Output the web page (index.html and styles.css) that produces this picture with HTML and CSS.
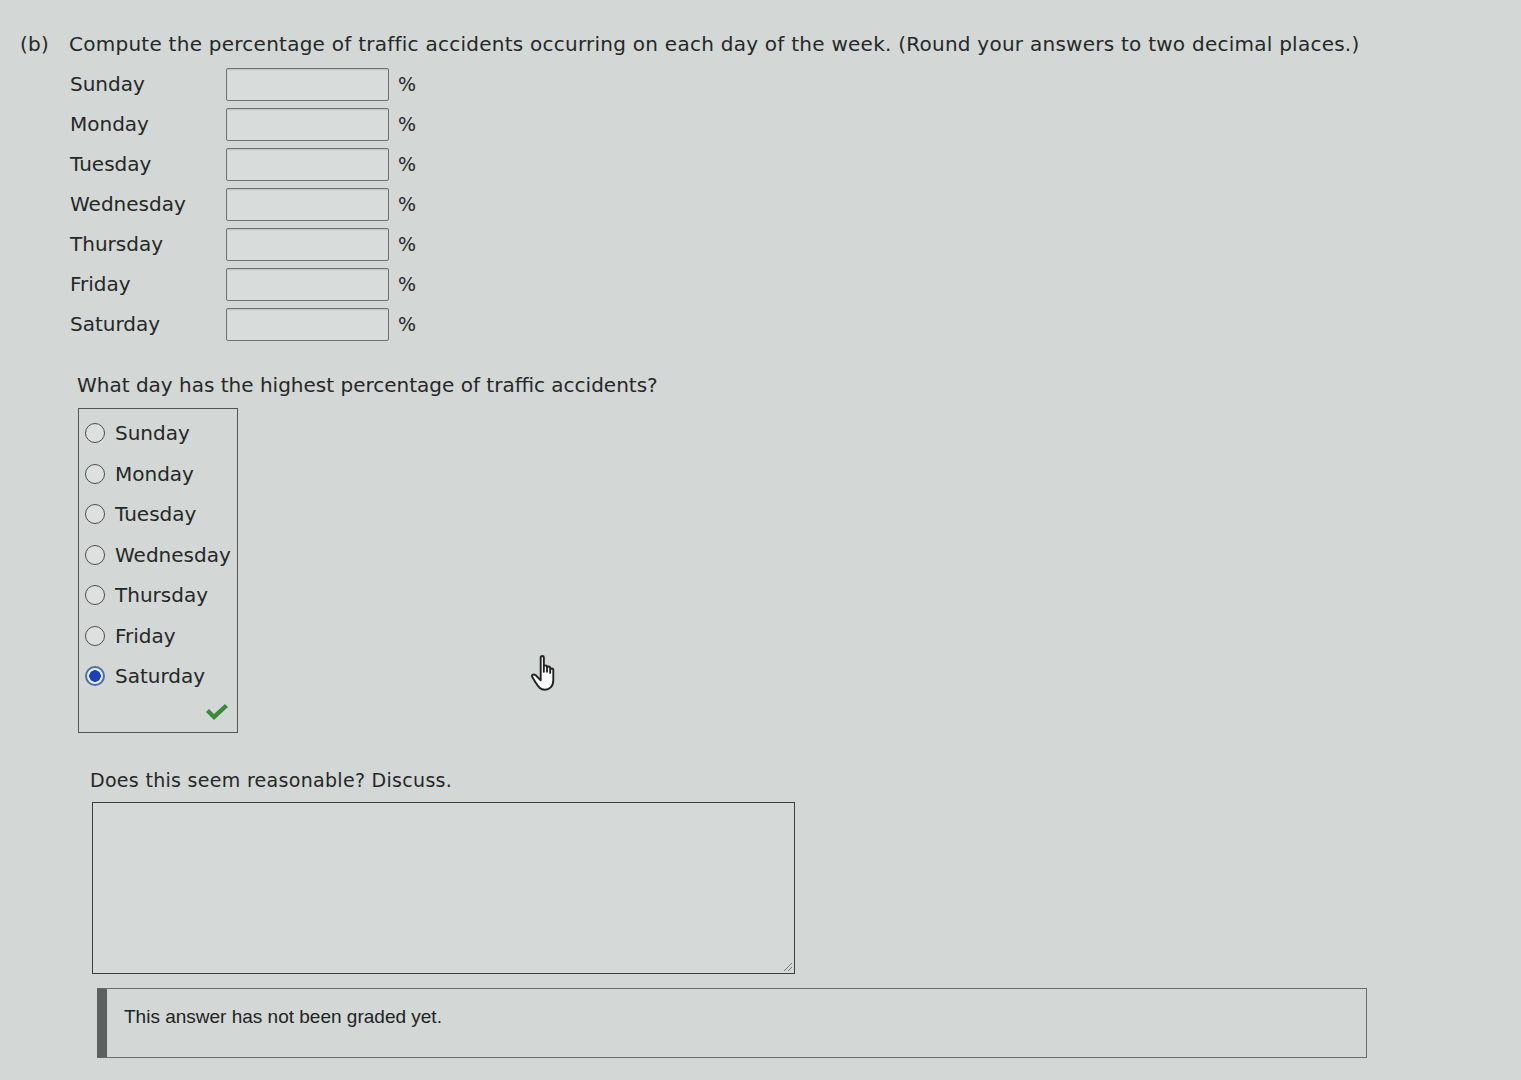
FILE: index.html
```html
<!DOCTYPE html>
<html>
<head>
<meta charset="utf-8">
<link rel="stylesheet" href="styles.css">
</head>
<body>
<div class="page">
  <div class="header">
    <span class="part">(b)</span>
    <span class="prompt">Compute the percentage of traffic accidents occurring on each day of the week. (Round your answers to two decimal places.)</span>
  </div>
  <div class="grid">
    <div class="label">Sunday</div><div class="box"></div><div class="pct">%</div>
    <div class="label">Monday</div><div class="box"></div><div class="pct">%</div>
    <div class="label">Tuesday</div><div class="box"></div><div class="pct">%</div>
    <div class="label">Wednesday</div><div class="box"></div><div class="pct">%</div>
    <div class="label">Thursday</div><div class="box"></div><div class="pct">%</div>
    <div class="label">Friday</div><div class="box"></div><div class="pct">%</div>
    <div class="label">Saturday</div><div class="box"></div><div class="pct">%</div>
  </div>
  <div class="question">What day has the highest percentage of traffic accidents?</div>
  <div class="radios">
    <div class="opt"><span class="radio"></span>Sunday</div>
    <div class="opt"><span class="radio"></span>Monday</div>
    <div class="opt"><span class="radio"></span>Tuesday</div>
    <div class="opt"><span class="radio"></span>Wednesday</div>
    <div class="opt"><span class="radio"></span>Thursday</div>
    <div class="opt"><span class="radio"></span>Friday</div>
    <div class="opt"><span class="radio checked"></span>Saturday</div>
    <div class="check">
      <svg width="24" height="18" viewBox="0 0 24 18"><path d="M1 9 L4 6 L9 11 L20 1 L23 4 L9 17 Z" fill="#3b8a3a"/></svg>
    </div>
  </div>
  <div class="discuss">Does this seem reasonable? Discuss.</div>
  <div class="textarea">
    <svg class="grip" width="12" height="12" viewBox="0 0 12 12"><path d="M11 3 L3 11 M11 7 L7 11" stroke="#777" stroke-width="1"/></svg>
  </div>
  <div class="graded">This answer has not been graded yet.</div>
</div>
<svg class="cursor" width="32" height="42" viewBox="0 0 30 40">
  <path d="M9 3 C9 1.5 12 1.5 12 3 L12 17 L12 12 C12 10.5 15 10.5 15 12 L15 17 L15 13 C15 11.5 18 11.5 18 13 L18 18 L18 15 C18 13.5 21 13.5 21 15 L21 25 C21 31 17 34 13 34 C9 34 7 32 4 27 L1 22 C0 20 2 19 4 20 L9 25 Z" fill="#fff" stroke="#222" stroke-width="1.8" stroke-linejoin="round"/>
</svg>
</body>
</html>
```
FILE: styles.css
```css
html, body {
  margin: 0;
  padding: 0;
}
body {
  background: #d3d7d5;
  font-family: "DejaVu Sans", Verdana, sans-serif;
  color: #262828;
  width: 1521px;
  height: 1080px;
  overflow: hidden;
  position: relative;
}
.page {
  padding: 30px 0 0 20px;
}
.header {
  display: flex;
  gap: 20px;
  font-size: 20px;
  line-height: 28px;
  letter-spacing: 0.25px;
}
.grid {
  display: grid;
  grid-template-columns: 156px 163px 40px;
  grid-auto-rows: 40px;
  align-items: center;
  margin: 6px 0 0 50px;
}
.label {
  font-size: 20px;
}
.box {
  height: 31px;
  border: 1px solid #6e7371;
  border-radius: 2px;
  background: #d8dcda;
  box-shadow: inset 0 1px 1px rgba(0,0,0,0.12);
}
.pct {
  font-size: 19px;
  padding-left: 9px;
}
.question {
  font-size: 20px;
  margin: 29px 0 0 57px;
}
.radios {
  margin: 11px 0 0 58px;
  width: 160px;
  border: 1px solid #555;
  padding: 4px 0 0 0;
  box-sizing: border-box;
  height: 325px;
}
.opt {
  display: flex;
  align-items: center;
  height: 40.5px;
  font-size: 20px;
  padding-left: 6px;
  gap: 10px;
}
.radio {
  width: 20px;
  height: 20px;
  border: 1.5px solid #4a4d4c;
  border-radius: 50%;
  box-sizing: border-box;
  background: #dde0df;
  flex: none;
}
.radio.checked {
  border: 2px solid #4b6fa8;
  background: radial-gradient(circle, #1a3fb8 0 5.5px, #e8ecf2 6px);
}
.check {
  display: flex;
  justify-content: flex-end;
  padding: 6px 8px 0 0;
}
.discuss {
  font-size: 19px;
  margin: 36px 0 0 70px;
  letter-spacing: 0.3px;
}
.textarea {
  margin: 11px 0 0 72px;
  width: 703px;
  height: 172px;
  border: 1px solid #3c4040;
  box-sizing: border-box;
  background: #d5d9d8;
  position: relative;
}
.grip {
  position: absolute;
  right: 1px;
  bottom: 1px;
}
.graded {
  margin: 14px 0 0 77px;
  width: 1270px;
  height: 70px;
  box-sizing: border-box;
  border: 1px solid #6a6e6c;
  border-left: 10px solid #5c605e;
  font-family: "Liberation Sans", Arial, sans-serif;
  font-size: 19px;
  padding: 17px 0 0 17px;
  color: #222424;
}
.cursor {
  position: absolute;
  left: 531px;
  top: 654px;
}
```
